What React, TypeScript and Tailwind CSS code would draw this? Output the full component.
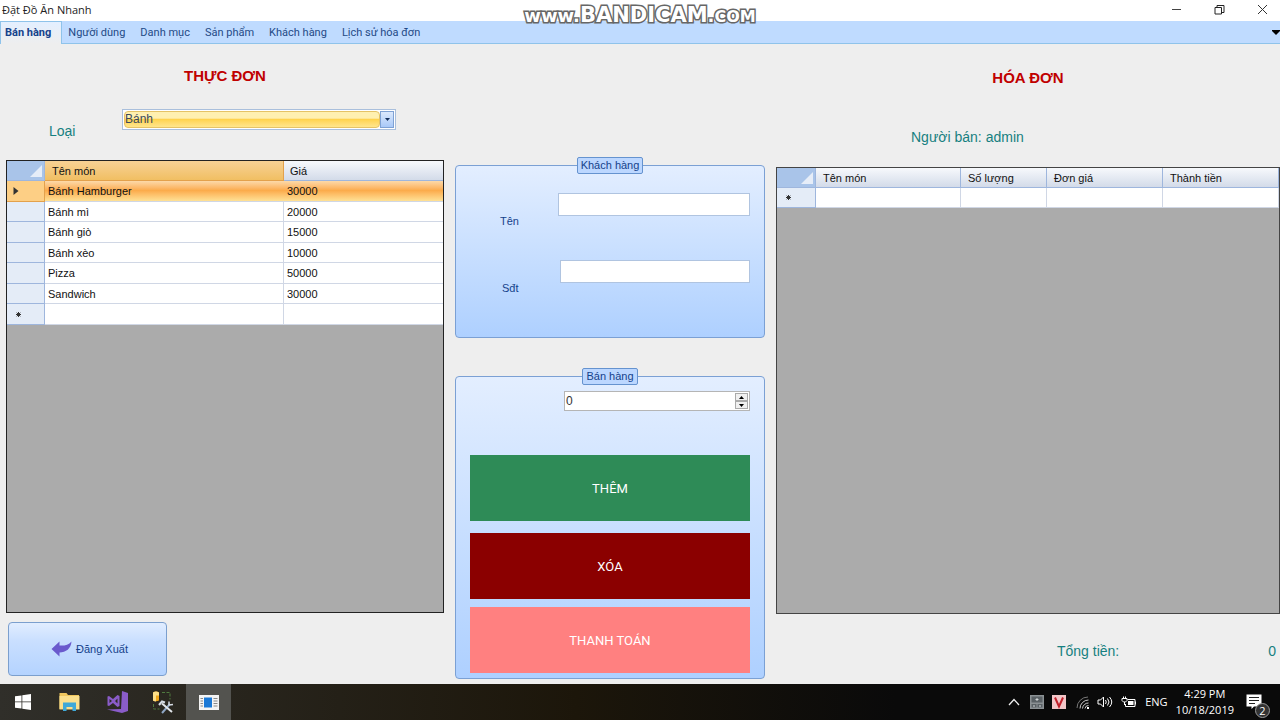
import { useState } from "react";

const tabs = ["Bán hàng", "Người dùng", "Danh mục", "Sản phẩm", "Khách hàng", "Lịch sử hóa đơn"];

const menu = [
  { name: "Bánh Hamburger", price: 30000 },
  { name: "Bánh mì", price: 20000 },
  { name: "Bánh giò", price: 15000 },
  { name: "Bánh xèo", price: 10000 },
  { name: "Pizza", price: 50000 },
  { name: "Sandwich", price: 30000 },
];

const billColumns = ["Tên món", "Số lượng", "Đơn giá", "Thành tiền"];

function TitleBar() {
  return (
    <header className="relative flex h-[21px] items-center justify-between bg-white pl-0.5">
      <h1 className="font-['Open_Sans',sans-serif] text-[11px] text-[#222]">Đặt Đồ Ăn Nhanh</h1>
      <div className="flex items-center gap-[23px] pr-2">
        <button aria-label="Minimize" className="flex h-5 w-5 items-center justify-center">
          <svg width="11" height="11" viewBox="0 0 11 11" stroke="#444">
            <path d="M1 4.5h9" />
          </svg>
        </button>
        <button aria-label="Restore" className="flex h-5 w-5 items-center justify-center">
          <svg width="11" height="11" viewBox="0 0 11 11" fill="none" stroke="#222">
            <path d="M1 2.5h6.500v6.500H1zM3 2.500v-2h7v7H7.500" />
          </svg>
        </button>
        <button aria-label="Close" className="flex h-5 w-5 items-center justify-center">
          <svg width="11" height="11" viewBox="0 0 11 11" stroke="#333">
            <path d="M1 0l9 9M10 0l-9 9" />
          </svg>
        </button>
      </div>
      <p className="absolute left-1/2 top-[3px] z-10 -translate-x-1/2 whitespace-nowrap font-['DejaVu_Sans',sans-serif] text-lg font-bold leading-6 text-white [paint-order:stroke] [-webkit-text-stroke:3px_#666]">
        www.<span className="text-[21px] leading-6">BANDICAM</span>.<span className="text-base leading-6">COM</span>
      </p>
    </header>
  );
}

function TabBar() {
  const [active, setActive] = useState(0);
  return (
    <nav className="flex h-[23px] items-stretch border-b border-[#8fc3ea] bg-[#bfdbff] font-['Roboto',sans-serif] text-[11px] text-[#1f4a86]">
      {tabs.map((tab, i) => (
        <button
          key={tab}
          onClick={() => setActive(i)}
          className={
            i === active
              ? "-mb-px border border-b-0 border-[#8fc3ea] bg-gradient-to-b from-[#e3efff] to-[#eeeeee] pl-1 pr-[10px] font-bold text-[#15428b]"
              : "pl-[6px] pr-[9px] pt-0.5"
          }
        >
          {tab}
        </button>
      ))}
      <button aria-label="Tabs" className="ml-auto">
        <svg width="8" height="5" viewBox="0 0 8 5">
          <path d="M0 0h8v1L4 5 0 1z" />
        </svg>
      </button>
    </nav>
  );
}

function CornerCell() {
  return (
    <th className="w-[38px] border-b border-r border-[#9eb6dd] bg-[#a9c4e9] p-0">
      <svg className="ml-auto mr-0.5" width="12" height="12" viewBox="0 0 12 12">
        <path d="M12 0v12H0z" fill="#e6edf8" />
      </svg>
    </th>
  );
}

function NewRowCell() {
  return (
    <td className="border-b border-r border-[#9eb6dd] bg-[#e4ecf7]">
      <svg className="ml-2" width="7" height="7" viewBox="0 0 7 7" stroke="#333">
        <path d="M3.5 1v5M1 3.5h5M1.7 1.7l3.6 3.6M5.3 1.7L1.7 5.3" />
      </svg>
    </td>
  );
}

function MenuPanel() {
  return (
    <section className="flex flex-col">
      <div className="h-[116px] pt-[22px]">
        <h2 className="text-center text-[15px] font-bold leading-5 text-[#c00000]">THỰC ĐƠN</h2>
        <div className="flex pl-[43px] pt-[23px]">
          <label htmlFor="category" className="w-[73px] pt-3 text-sm leading-5 text-[#168080]">
            Loại
          </label>
          <div className="relative h-[21px] w-[274px] border border-[#a9bfdc] bg-white p-px">
            <select
              id="category"
              className="block h-[17px] w-[256px] appearance-none rounded-sm border border-[#e5c365] bg-gradient-to-b from-[#fff0b0] from-40% via-[#ffd34d] via-50% to-[#ffe68c] text-xs leading-[15px] text-[#3c4a5c]"
            >
              <option>Bánh</option>
            </select>
            <span className="pointer-events-none absolute right-px top-px flex h-[17px] w-[14px] items-center justify-center border border-[#7fa2d4] bg-gradient-to-b from-[#dce9fc] to-[#a9c9f8]">
              <svg width="5" height="3" viewBox="0 0 5 3">
                <path d="M0 0h5L2.5 3z" fill="#15305c" />
              </svg>
            </span>
          </div>
        </div>
      </div>

      <div className="flex-1 border border-[#222] bg-[#ababab]">
        <table className="w-full table-fixed border-separate border-spacing-0 text-[11px] leading-[18px] text-[#111]">
          <thead>
            <tr className="h-5">
              <CornerCell />
              <th className="w-[239px] border-b border-r border-[#e3a14c] bg-gradient-to-b from-[#f7d194] to-[#f1bf62] pl-[7px] text-left font-normal">
                Tên món
              </th>
              <th className="border-b border-[#9eb6dd] bg-gradient-to-b from-[#f7f9fc] to-[#d3dbe9] pl-[6px] text-left font-normal">
                Giá
              </th>
            </tr>
          </thead>
          <tbody>
            {menu.map((item, i) =>
              i === 0 ? (
                <tr key={item.name} className="h-[21px] bg-gradient-to-b from-[#fcd9a8] via-[#fbab4b] via-45% to-[#fee69b]">
                  <td className="border-b border-r border-[#e3a14c] bg-[#fdcf85]">
                    <svg className="ml-[6px]" width="6" height="8" viewBox="0 0 6 8">
                      <path d="M0.5 0v8L5.5 4z" fill="#333" />
                    </svg>
                  </td>
                  <td className="border-b border-[#d0d7e5] pl-[3px]">{item.name}</td>
                  <td className="border-b border-[#d0d7e5] pl-[3px]">{item.price}</td>
                </tr>
              ) : (
                <tr key={item.name} className="bg-white odd:h-[21px] even:h-5">
                  <td className="border-b border-r border-[#9eb6dd] bg-[#e4ecf7]" />
                  <td className="border-b border-r border-[#d0d7e5] pl-[3px]">{item.name}</td>
                  <td className="border-b border-[#d0d7e5] pl-[3px]">{item.price}</td>
                </tr>
              )
            )}
            <tr className="h-[21px] bg-white">
              <NewRowCell />
              <td className="border-b border-r border-[#d0d7e5]" />
              <td className="border-b border-[#d0d7e5]" />
            </tr>
          </tbody>
        </table>
      </div>

      <div className="h-[71px] pl-0.5 pt-[9px]">
        <button className="flex h-[54px] w-[159px] items-center justify-center gap-1 rounded-sm border border-[#7b9fce] bg-gradient-to-b from-[#e1edff] from-0% via-[#c9dfff] via-35% to-[#b4d3ff] pl-1 text-[11px] text-[#15428b]">
          <svg width="21" height="16" viewBox="0 0 21 16">
            <path d="M0.500 8L8.500 0.500V4.500C13 5 17.500 4 20.500 0.500C20 7.500 15 11.500 8.500 11.500V15.500z" fill="#6a5acd" />
          </svg>
          Đăng Xuất
        </button>
      </div>
    </section>
  );
}

function SalePanel() {
  const [quantity, setQuantity] = useState(0);
  return (
    <section className="flex flex-col gap-[30px] pb-[5px] pt-[113px] text-[11px] text-[#15428b]">
      <fieldset className="h-[181px] min-w-0 rounded border border-[#7ba0d4] bg-gradient-to-b from-[#e3eeff] to-[#aed0ff] px-[14px]">
        <legend className="mx-auto h-[17px] rounded-xs border border-[#6593cf] bg-[#bcd7ff] px-[3px] leading-[15px]">
          Khách hàng
        </legend>
        <div className="flex pl-[30px] pt-[19px]">
          <label htmlFor="customer" className="w-[58px] pt-5 leading-4">
            Tên
          </label>
          <input id="customer" className="h-[23px] min-w-0 flex-1 border border-[#b0c4e0] bg-white px-1" />
        </div>
        <div className="flex pl-[30px] pt-[31px]">
          <label htmlFor="phone" className="w-[60px] pl-0.5 pt-5 leading-4">
            Sđt
          </label>
          <input id="phone" className="h-[23px] min-w-0 flex-1 border border-[#b0c4e0] bg-white px-1" />
        </div>
      </fieldset>

      <fieldset className="min-w-0 flex-1 rounded border border-[#7ba0d4] bg-gradient-to-b from-[#e3eeff] to-[#aed0ff] px-[14px]">
        <legend className="mx-auto h-[17px] rounded-xs border border-[#6593cf] bg-[#bcd7ff] px-[3px] leading-[15px]">
          Bán hàng
        </legend>
        <div className="ml-auto mt-[6px] flex h-5 w-[186px] border border-[#b5b5b5] bg-white p-px">
          <input
            type="number"
            aria-label="Số lượng"
            value={quantity}
            onChange={(e) => setQuantity(Number(e.target.value))}
            className="min-w-0 flex-1 [appearance:textfield] text-xs text-[#333] [&::-webkit-inner-spin-button]:appearance-none"
          />
          <div className="flex w-[13px] flex-col">
            <button
              aria-label="Tăng"
              onClick={() => setQuantity(quantity + 1)}
              className="flex flex-1 items-center justify-center border border-[#aaa] bg-[#f0f0f0]"
            >
              <svg width="5" height="3" viewBox="0 0 5 3">
                <path d="M0 3h5L2.500 0z" />
              </svg>
            </button>
            <button
              aria-label="Giảm"
              onClick={() => setQuantity(Math.max(0, quantity - 1))}
              className="flex flex-1 items-center justify-center border border-[#aaa] bg-[#f0f0f0]"
            >
              <svg width="5" height="3" viewBox="0 0 5 3">
                <path d="M0 0h5L2.500 3z" />
              </svg>
            </button>
          </div>
        </div>
        <div className="mt-11 flex flex-col font-['Roboto',sans-serif] text-[13px] text-white">
          <button className="h-[66px] bg-[#2e8b57] pt-0.5">THÊM</button>
          <button className="mt-3 h-[66px] bg-[#8b0000] pt-0.5">XÓA</button>
          <button className="mt-2 h-[66px] bg-[#ff8080] pt-0.5">THANH TOÁN</button>
        </div>
      </fieldset>
    </section>
  );
}

function BillPanel() {
  return (
    <section className="flex flex-col text-sm text-[#168080]">
      <div className="h-[123px] pt-6">
        <h2 className="text-center text-[15px] font-bold leading-5 text-[#c00000]">HÓA ĐƠN</h2>
        <p className="flex gap-1 pl-[135px] pt-[39px] leading-5">
          <span>Người bán:</span>
          <span>admin</span>
        </p>
      </div>
      <div className="flex-1 border border-[#444] bg-[#ababab]">
        <table className="w-full table-fixed border-separate border-spacing-0 text-[11px] leading-[18px] text-[#111]">
          <colgroup>
            <col className="w-[39px]" />
            <col className="w-[145px]" />
            <col className="w-[86px]" />
            <col className="w-[116px]" />
            <col />
          </colgroup>
          <thead>
            <tr className="h-5">
              <CornerCell />
              {billColumns.map((column) => (
                <th
                  key={column}
                  className="border-b border-r border-[#9eb6dd] bg-gradient-to-b from-[#f7f9fc] to-[#d3dbe9] pl-[7px] text-left font-normal"
                >
                  {column}
                </th>
              ))}
            </tr>
          </thead>
          <tbody>
            <tr className="h-5 bg-white">
              <NewRowCell />
              {billColumns.map((column) => (
                <td key={column} className="border-b border-r border-[#d0d7e5]" />
              ))}
            </tr>
          </tbody>
        </table>
      </div>
      <p className="flex h-[70px] justify-between pl-[281px] pr-1 pt-[27px] leading-5">
        <span>Tổng tiền:</span>
        <span>0</span>
      </p>
    </section>
  );
}

function Taskbar() {
  return (
    <footer className="flex h-9 items-stretch bg-gradient-to-r from-[#302f2a] via-[#1c160a] via-45% to-[#0a0a0a] to-70% font-['Open_Sans',sans-serif] text-white">
      <button aria-label="Start" className="flex w-[46px] items-center justify-center">
        <svg width="16" height="16" viewBox="0 0 16 16" fill="#fff">
          <path d="M0 2.300L6.500 1.400V7.500H0zM7.300 1.300L16 0V7.500H7.300zM0 8.300H6.500V14.600L0 13.700zM7.300 8.300H16V16L7.300 14.700z" />
        </svg>
      </button>
      <button aria-label="File Explorer" className="flex w-[47px] items-center justify-center">
        <svg width="21" height="18" viewBox="0 0 21 18">
          <path d="M0.500 0h7l1.500 2h11v14H0.500z" fill="#f0c75e" />
          <path d="M0.500 3h20V16.500H0.500z" fill="#fbe08d" />
          <path d="M4 18v-8.500h13V18h-3.500v-4h-6V18z" fill="#3fa9d8" />
        </svg>
      </button>
      <button aria-label="Visual Studio" className="flex w-[47px] items-center justify-center">
        <svg width="22" height="22" viewBox="0 0 22 22">
          <path d="M16 0l6 2v18l-6 2L1 18.500l14-0.500z" fill="#8a5cc9" />
          <path d="M1.500 5.500L3 5l4 3 4.500-4 2 1v10l-2 1L7 12l-4 3-1.500-.5zM3.500 8v4L6 10zM11.500 7.500L9 10l2.500 2.500z" fill="#8a5cc9" fillRule="evenodd" />
        </svg>
      </button>
      <button aria-label="SQL Server" className="flex w-[46px] items-center justify-center">
        <svg width="22" height="23" viewBox="0 0 22 23">
          <path d="M1 1.500q3-2 6 0v8q-3 1.500-6 0z" fill="#f0a81c" />
          <path d="M1 1.500q3-2 6 0v3H4v6q-2 0-3-1z" fill="#fde08a" />
          <path d="M10 1.500h8v7M1.500 13v5h6" stroke="#4f7a3f" strokeDasharray="3 1.500" fill="none" />
          <path d="M10 22l8-9" stroke="#8fa6c4" strokeWidth="2" />
          <path d="M10 12.500l10 8.500" stroke="#e3e7ec" strokeWidth="2" />
          <path d="M7 14l3-3.500 3 1" stroke="#d5dbe3" strokeWidth="2" fill="none" />
          <path d="M17 10.500v3.500l4-0.500" stroke="#d5dbe3" strokeWidth="1.500" fill="none" />
        </svg>
      </button>
      <button aria-label="Đặt Đồ Ăn Nhanh" className="flex w-[45px] items-center justify-center bg-[#53534f]">
        <svg width="20" height="15" viewBox="0 0 20 15">
          <path d="M0 0h20v15H0z" fill="#f4f4f4" />
          <path d="M5 2.500h8v10H5z" fill="#1a78d6" />
          <path d="M1.500 3.500h2.500M1.500 6h2.500M1.500 8.500h2.500M1.500 11h2.500M14.500 3.500h4M14.500 6h4M14.500 8.500h4M14.500 11h4" stroke="#888" />
        </svg>
      </button>

      <div className="ml-auto flex items-center gap-2 pr-[10px]">
        <svg width="12" height="8" viewBox="0 0 12 8" fill="none" stroke="#eee" strokeWidth="1.300">
          <path d="M1 7l5-5.500L11 7" />
        </svg>
        <svg className="ml-0.5" width="14" height="14" viewBox="0 0 14 14">
          <path d="M0 0h14v14H0z" fill="#8b9194" />
          <path d="M1.500 1.500h11v6h-11zM1.500 9h5v3.500h-5zM7.500 9h5v3.500h-5z" fill="#5a6165" />
          <path d="M7 3v3M5.500 4.500h3M3 11h2M9 11h2" stroke="#cfd4d6" />
        </svg>
        <svg width="14" height="14" viewBox="0 0 14 14">
          <path d="M0 0h14v14H0z" fill="#f3c6c8" />
          <path d="M3 2.500l4 9 4-9" fill="none" stroke="#c2202b" strokeWidth="2" />
        </svg>
        <svg className="ml-0.5" width="13" height="13" viewBox="0 0 13 13" fill="none" stroke="#ccc">
          <path d="M1 12A11 11 0 0 1 12 1" stroke="#777" />
          <path d="M4 12.500A8.500 8.500 0 0 1 12.500 4M6.500 12.500A6 6 0 0 1 12.500 7M9 12.500A3.500 3.500 0 0 1 12.500 9.500" />
          <path d="M11 11h2v2h-2z" fill="#fff" stroke="none" />
        </svg>
        <svg width="16" height="14" viewBox="0 0 16 14" fill="none" stroke="#fff">
          <path d="M1 5h2.500L6.500 2v10l-3-3H1zM8.500 5q1.500 2 0 4M10.500 3.500q3 3.500 0 7M12.500 2q4.500 5 0 10" />
        </svg>
        <svg width="16" height="12" viewBox="0 0 16 12" fill="none" stroke="#fff">
          <path d="M6.500 3.500h7.500v7H4.500V8M14.500 5.500v3M1 2.500h5v2L4.500 6h-2L1 4.500zM2.500 0.500v2M4.500 0.500v2M3.500 6v3" />
          <path d="M7 5h5.500v4H7z" fill="#fff" stroke="none" />
        </svg>
        <span className="text-[11px]">ENG</span>
        <p className="text-center text-[11px] leading-4">
          4:29 PM
          <br />
          10/18/2019
        </p>
        <button aria-label="Notifications" className="relative ml-1 h-6 w-6">
          <svg className="absolute left-0 top-1" width="16" height="16" viewBox="0 0 16 16">
            <path d="M0.500 0.500h15v12H8L5.500 15v-2.500h-5z" fill="#fff" />
            <path d="M3 3.500h10M3 6.500h10M3 9.500h6" stroke="#222" />
          </svg>
          <span className="absolute -bottom-1 right-0 h-[15px] w-[15px] rounded-full border border-[#999] bg-[#333] text-[11px] leading-[13px]">
            2
          </span>
        </button>
      </div>
    </footer>
  );
}

export default function App() {
  return (
    <div className="flex min-h-screen flex-col bg-[#eeeeee] font-['Liberation_Sans',Arial,sans-serif]">
      <TitleBar />
      <TabBar />
      <main className="grid flex-1 grid-cols-[438fr_310fr_504fr] gap-x-[11px] pl-[6px]">
        <MenuPanel />
        <SalePanel />
        <BillPanel />
      </main>
      <Taskbar />
    </div>
  );
}
